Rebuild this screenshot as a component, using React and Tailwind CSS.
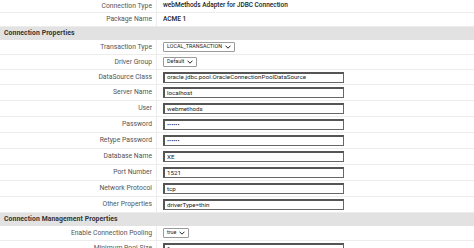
import React from "react";

const F = { fontFamily: "Roboto, 'Liberation Sans', sans-serif" };

function Row({ label, children, h = "h-[16px]" }) {
  return (
    <div className={`flex ${h} border-b border-[#ececec]`}>
      <div className="w-[157px] shrink-0 border-r border-[#ececec] flex items-center justify-end pr-[4px] text-[#555] text-[6.8px]">
        {label}
      </div>
      <div className="flex-1 flex items-center pl-[6px] text-[#222] text-[6.5px]">{children}</div>
    </div>
  );
}

function Input({ value }) {
  return (
    <div className="w-[181px] h-[11px] border border-[#666] border-t-[2px] border-l-[2px] border-t-[#555] border-l-[#555] bg-white flex items-center pl-[2px] text-[6.2px] text-[#222] leading-none">
      {value}
    </div>
  );
}

function Select({ value }) {
  return (
    <div className="h-[10px] border border-[#9a9a9a] rounded-[1px] bg-white flex items-center gap-[3px] pl-[3px] pr-[3px] text-[5.4px] text-[#222] leading-none">
      <span>{value}</span>
      <svg width="6" height="4" viewBox="0 0 6 4"><path d="M0.5 0.7 L3 3.2 L5.5 0.7" fill="none" stroke="#222" strokeWidth="1" /></svg>
    </div>
  );
}

function Header({ title }) {
  return (
    <div className="h-[13px] bg-[#e2e2e2] flex items-center pl-[4px] text-[6.8px] font-bold text-[#333] tracking-[0.1px]">
      {title}
    </div>
  );
}

export default function App() {
  return (
    <div className="w-[474px] h-[248px] overflow-hidden bg-white" style={F}>
      <Row label="Connection Type" h="h-[13px]">
        <span className="font-medium">webMethods Adapter for JDBC Connection</span>
      </Row>
      <Row label="Package Name" h="h-[14px]">
        <span className="font-medium">ACME 1</span>
      </Row>
      <Header title="Connection Properties" />
      <Row label="Transaction Type" h="h-[15px]">
        <Select value="LOCAL_TRANSACTION" />
      </Row>
      <Row label="Driver Group" h="h-[15px]">
        <Select value="Default" />
      </Row>
      <Row label="DataSource Class" h="h-[15px]">
        <Input value="oracle.jdbc.pool.OracleConnectionPoolDataSource" />
      </Row>
      <Row label="Server Name"><Input value="localhost" /></Row>
      <Row label="User"><Input value="webmethods" /></Row>
      <Row label="Password"><Input value="••••••" /></Row>
      <Row label="Retype Password"><Input value="••••••" /></Row>
      <Row label="Database Name"><Input value="XE" /></Row>
      <Row label="Port Number"><Input value="1521" /></Row>
      <Row label="Network Protocol"><Input value="tcp" /></Row>
      <Row label="Other Properties"><Input value="driverType=thin" /></Row>
      <Header title="Connection Management Properties" />
      <Row label="Enable Connection Pooling" h="h-[15px]">
        <Select value="true" />
      </Row>
      <Row label="Minimum Pool Size"><Input value="1" /></Row>
    </div>
  );
}
